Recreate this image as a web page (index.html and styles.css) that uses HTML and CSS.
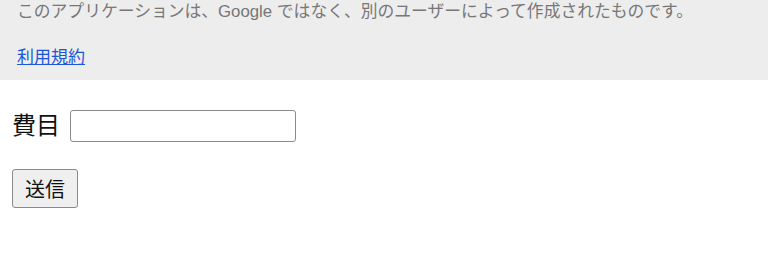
FILE: index.html
```html
<!DOCTYPE html>
<html lang="ja">
<head>
<meta charset="utf-8">
<link rel="stylesheet" href="styles.css">
</head>
<body>
<div class="banner">
  <div class="notice">このアプリケーションは、Google ではなく、別のユーザーによって作成されたものです。</div>
  <a class="terms" href="#">利用規約</a>
</div>
<form class="form">
  <div class="row">
    <label class="label" for="himoku">費目</label>
    <input class="field" id="himoku" type="text">
  </div>
  <button class="submit" type="button">送信</button>
</form>
</body>
</html>
```
FILE: styles.css
```css
html, body {
  margin: 0;
  padding: 0;
  background: #fff;
  font-family: "Liberation Sans", Arial, "Noto Sans CJK JP", sans-serif;
}
.banner {
  background: #ededed;
  height: 80px;
  box-sizing: border-box;
  padding: 2px 17px 0;
}
.notice {
  color: #777;
  font-size: 16.8px;
  line-height: 20px;
  white-space: nowrap;
}
.terms {
  display: inline-block;
  margin-top: 25px;
  color: #1a56d6;
  font-size: 17px;
  line-height: 22px;
  text-decoration: underline;
}
.form {
  padding: 29px 12px 0;
}
.row {
  display: flex;
  align-items: center;
  gap: 10px;
}
.label {
  font-size: 24px;
  color: #111;
  line-height: 34px;
}
.field {
  width: 226px;
  height: 32px;
  box-sizing: border-box;
  border: 1px solid #8a8a8a;
  border-radius: 3px;
  padding: 0 4px;
  margin: 0;
  background: #fff;
}
.submit {
  margin-top: 26px;
  width: 66px;
  height: 39px;
  box-sizing: border-box;
  padding: 0;
  font-family: "Liberation Sans", Arial, "Noto Sans CJK JP", sans-serif;
  font-size: 20px;
  color: #111;
  background: #efefef;
  border: 1px solid #8a8a8a;
  border-radius: 3px;
}
```
